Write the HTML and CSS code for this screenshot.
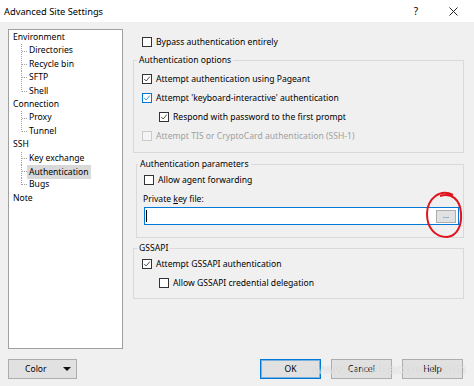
FILE: index.html
```html
<!DOCTYPE html>
<html>
    <head>
        <title>Advanced Site Settings</title>
        <link rel="stylesheet" href="styles.css">
    </head>
    <body>
        <div class="titlebar">
            <span class="title">Advanced Site Settings</span>
            <span class="help">?</span>
            <svg class="close" width="9" height="9" viewBox="0 0 9 9"><path d="M0.5 0.5 L8.5 8.5 M8.5 0.5 L0.5 8.5" stroke="#222" stroke-width="1" fill="none"/></svg>
        </div>
        <div class="main">
            <ul class="tree">
                <li class="node">Environment</li>
                <li class="leaf">Directories</li>
                <li class="leaf">Recycle bin</li>
                <li class="leaf">SFTP</li>
                <li class="leaf last">Shell</li>
                <li class="node">Connection</li>
                <li class="leaf">Proxy</li>
                <li class="leaf last">Tunnel</li>
                <li class="node">SSH</li>
                <li class="leaf">Key exchange</li>
                <li class="leaf"><span class="selected">Authentication</span></li>
                <li class="leaf last">Bugs</li>
                <li class="node">Note</li>
            </ul>
            <div class="panel">
                <div class="row top-row">
                    <span class="box"></span>Bypass authentication entirely
                </div>
                <fieldset class="group options">
                    <legend>Authentication options</legend>
                    <div class="row">
                        <span class="box"><svg viewBox="0 0 10 10"><polyline points="1.5,5 4,7.5 8.5,2" /></svg></span>Attempt authentication using Pageant
                    </div>
                    <div class="row">
                        <span class="box focus"><svg viewBox="0 0 10 10"><polyline points="1.5,5 4,7.5 8.5,2" /></svg></span>Attempt 'keyboard-interactive' authentication
                    </div>
                    <div class="row sub">
                        <span class="box"><svg viewBox="0 0 10 10"><polyline points="1.5,5 4,7.5 8.5,2" /></svg></span>Respond with password to the first prompt
                    </div>
                    <div class="row disabled">
                        <span class="box"></span>Attempt TIS or CryptoCard authentication (SSH-1)
                    </div>
                </fieldset>
                <fieldset class="group params">
                    <legend>Authentication parameters</legend>
                    <div class="row">
                        <span class="box"></span>Allow agent forwarding
                    </div>
                    <div class="field-label">Private <u>k</u>ey file:</div>
                    <div class="keyfile">
                        <span class="caret"></span>
                        <span class="browse">...</span>
                    </div>
                </fieldset>
                <fieldset class="group gss">
                    <legend>GSSAPI</legend>
                    <div class="row">
                        <span class="box"><svg viewBox="0 0 10 10"><polyline points="1.5,5 4,7.5 8.5,2" /></svg></span>Attempt GSSAPI authentication
                    </div>
                    <div class="row sub">
                        <span class="box"></span>Allow GSSAPI credential delegation
                    </div>
                </fieldset>
            </div>
        </div>
        <div class="footer">
            <button class="btn color-btn">Color<span class="arrow"></span></button>
            <button class="btn default">OK</button>
            <button class="btn">Cancel</button>
            <button class="btn">Help</button>
        </div>
        <div class="watermark">www.alibabacloud.com</div>
        <svg class="circle" width="474" height="386" viewBox="0 0 474 386">
            <path d="M453 195 C440 188 427 199 427 214 C427 229 436 237 447 237 C457 236 462 226 461 213 C460 200 452 192 440 196" fill="none" stroke="#e0141e" stroke-width="2"/>
        </svg>
    </body>
</html>
```

FILE: styles.css
```css
*
{
    box-sizing: border-box;
}
body
{
    margin: 0;
    width: 474px;
    height: 386px;
    background: #f0f0f0;
    font-family: "Noto Sans", sans-serif;
    font-size: 8.6px;
    color: #000;
    overflow: hidden;
    position: relative;
}
.titlebar
{
    height: 22px;
    background: #fff;
    display: flex;
    align-items: center;
    padding-left: 4px;
}
.title
{
    flex: 1;
    font-size: 9.3px;
}
.help
{
    width: 10px;
    text-align: center;
    font-size: 10px;
    margin-right: 28px;
}
.close
{
    margin-right: 16px;
}
.main
{
    display: flex;
    padding-top: 7px;
    height: 327px;
}
.tree
{
    list-style: none;
    margin: 0 0 0 8px;
    width: 115px;
    height: 320px;
    padding: 1px 0 0 0;
    background: #fff;
    border: 1px solid #a0a0a0;
}
.tree li
{
    height: 13.4px;
    line-height: 13.4px;
    white-space: nowrap;
}
.node
{
    padding-left: 4px;
}
.leaf
{
    padding-left: 20px;
    background:
        repeating-linear-gradient(to right, #a0a0a0 0 1px, transparent 1px 2px) 13px 50% / 5px 1px no-repeat,
        repeating-linear-gradient(to bottom, #a0a0a0 0 1px, transparent 1px 2px) 12px 0 / 1px 100% no-repeat;
}
.leaf.last
{
    background:
        repeating-linear-gradient(to right, #a0a0a0 0 1px, transparent 1px 2px) 13px 50% / 5px 1px no-repeat,
        repeating-linear-gradient(to bottom, #a0a0a0 0 1px, transparent 1px 2px) 12px 0 / 1px 50% no-repeat;
}
.selected
{
    display: inline-block;
    background: #d9d9d9;
    margin-left: -2px;
    padding: 0 3px 0 2px;
    height: 14px;
    line-height: 14px;
}
.panel
{
    margin-left: 10px;
    width: 331px;
}
.row
{
    display: flex;
    align-items: center;
    height: 19px;
    padding-left: 8px;
    white-space: nowrap;
}
.row.top-row
{
    margin-top: 3px;
    padding-left: 9px;
}
.row.sub
{
    padding-left: 25px;
}
.box
{
    width: 10px;
    height: 10px;
    border: 1px solid #333;
    background: #fff;
    margin-right: 4px;
    display: flex;
}
.box svg
{
    width: 8px;
    height: 8px;
    fill: none;
    stroke: #222;
    stroke-width: 1;
}
.box.focus
{
    border-color: #0078d7;
}
.box.focus svg
{
    stroke: #0078d7;
}
.disabled
{
    color: #a0a0a0;
}
.disabled .box
{
    border-color: #cccccc;
    background: #f4f4f4;
}
.group
{
    margin: 0;
    min-width: 0;
    border: 1px solid #d9d9d9;
    padding: 0;
}
.group legend
{
    margin-left: 3px;
    padding: 0 2px;
    height: 12px;
    line-height: 12px;
}
.options
{
    margin-top: 3px;
    padding: 3px 0 7px 0;
}
.params
{
    margin: 5px 0 0 3px;
    width: 328px;
    padding: 0 0 12px 0;
}
.params legend
{
    margin-left: 1px;
}
.params .row
{
    padding-left: 7px;
}
.field-label
{
    margin: 4px 0 0 6px;
    height: 12px;
    line-height: 12px;
}
.keyfile
{
    display: flex;
    align-items: center;
    margin: 2px 4px 0 7px;
    height: 18px;
    background: #fff;
    border: 1px solid #0078d7;
}
.caret
{
    width: 1px;
    height: 12px;
    background: #000;
    margin-left: 1px;
}
.browse
{
    margin-left: auto;
    margin-right: 2px;
    width: 20px;
    height: 13px;
    border: 1px solid #adadad;
    background: #e1e1e1;
    color: #666;
    font-size: 8px;
    line-height: 8px;
    text-align: center;
}
.gss
{
    margin-top: 4px;
    padding: 0 0 6px 0;
}
.footer
{
    display: flex;
    padding: 10px 11px 0 8px;
    gap: 10px;
}
.btn
{
    width: 61px;
    height: 20px;
    background: #e1e1e1;
    border: 1px solid #adadad;
    font-family: "Noto Sans", sans-serif;
    font-size: 8.6px;
    color: #000;
    padding: 0;
}
.color-btn
{
    width: 69px;
    margin-right: auto;
    display: flex;
    align-items: center;
    padding: 0 5px 0 16px;
}
.arrow
{
    margin-left: auto;
    width: 0;
    height: 0;
    border-left: 4px solid transparent;
    border-right: 4px solid transparent;
    border-top: 4px solid #111;
}
.default
{
    border-color: #0078d7;
    box-shadow: inset 0 0 0 1px rgba(0, 120, 215, 0.45);
}
.watermark
{
    position: absolute;
    left: 312px;
    top: 361px;
    font-family: "Liberation Sans", sans-serif;
    font-weight: bold;
    font-size: 14px;
    color: rgba(255, 255, 255, 0.55);
    text-shadow: 0 0 1px rgba(0, 0, 0, 0.15);
}
.circle
{
    position: absolute;
    left: 0;
    top: 0;
    pointer-events: none;
}
```
